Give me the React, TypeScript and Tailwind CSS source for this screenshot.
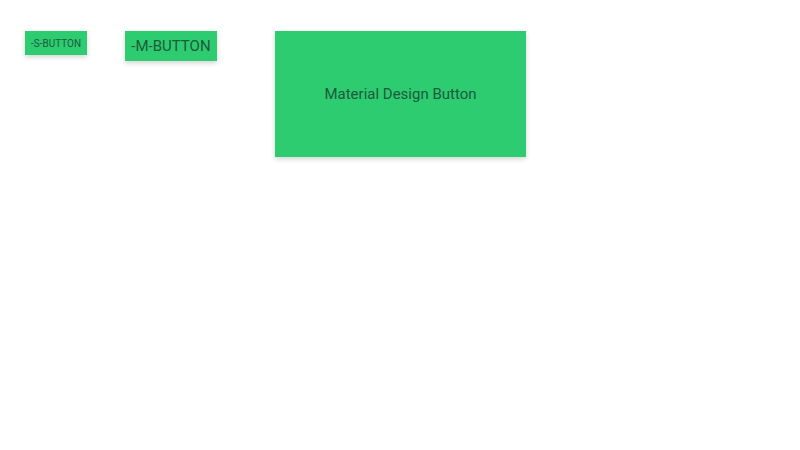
export default function App() {
  return (
    <div className="flex items-start bg-white min-h-[450px] pt-[31px] pl-[25px]" style={{ fontFamily: "Roboto, 'Liberation Sans', sans-serif" }}>
      {/* small */}
      <button className="w-[62px] h-[24px] bg-[#2ecc71] text-[#1d5a3a] text-[10px] shadow-[0_2px_5px_rgba(0,0,0,0.18)] flex items-center justify-center">
        -S-BUTTON
      </button>
      {/* medium */}
      <button className="ml-[38px] w-[92px] h-[30px] bg-[#2ecc71] text-[#1d5a3a] text-[15px] shadow-[0_2px_5px_rgba(0,0,0,0.18)] flex items-center justify-center">
        -M-BUTTON
      </button>
      {/* large */}
      <button className="ml-[58px] w-[251px] h-[126px] bg-[#2ecc71] text-[#1d5a3a] text-[15px] shadow-[0_2px_5px_rgba(0,0,0,0.18)] flex items-center justify-center">
        Material Design Button
      </button>
    </div>
  );
}
